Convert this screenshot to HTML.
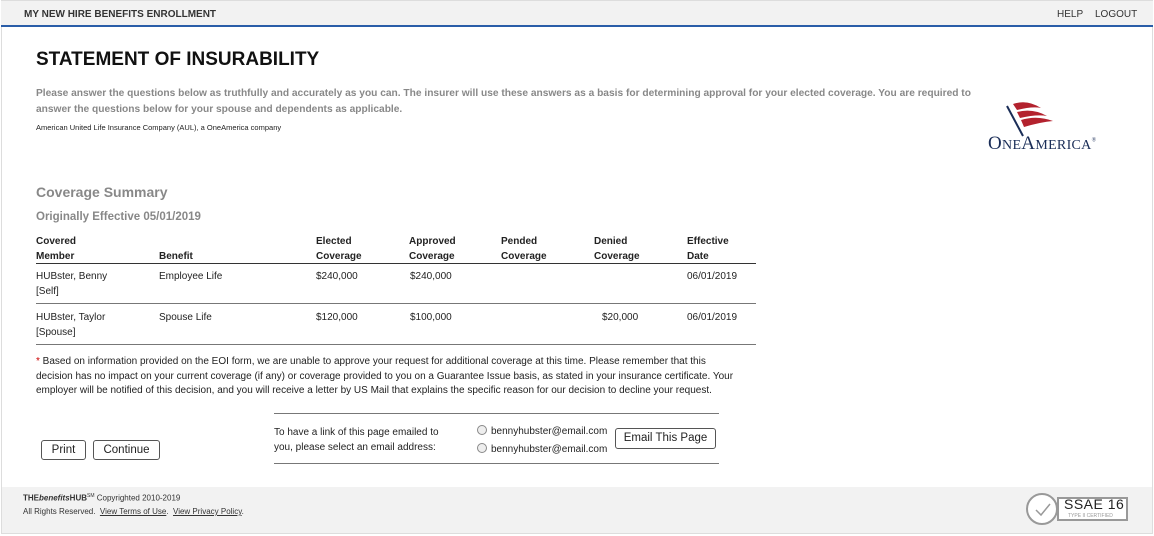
<!DOCTYPE html>
<html><head><style>
*{margin:0;padding:0;box-sizing:border-box}
body{width:1154px;height:536px;background:#fff;font-family:"Liberation Sans",sans-serif;color:#222;position:relative;overflow:hidden}
.frame{position:absolute;left:1px;top:0;width:1152px;height:534px;border:1px solid #ddd}
.hdr{position:absolute;left:1px;top:1px;width:1152px;height:26px;background:#f2f2f2;border-bottom:2px solid #2a5da8}
.hdr .t{position:absolute;left:23px;top:8px;font-size:10px;font-weight:bold;color:#333}
.hdr .r{position:absolute;top:8px;font-size:10px;color:#333}
.abs{position:absolute;white-space:nowrap}
h1{position:absolute;left:36px;top:49px;font-size:19px;font-weight:bold;color:#111}
.intro{position:absolute;left:36px;top:86px;font-size:10.2px;font-weight:bold;color:#888;line-height:15.5px;width:950px}
.small{font-size:7.5px;color:#222}
.h2{font-size:14px;font-weight:bold;color:#888}
.h3{font-size:11.5px;font-weight:bold;color:#888}
.th{font-size:10px;font-weight:bold;line-height:15px;color:#222}
.td{font-size:10px;line-height:15px;color:#222}
.line{position:absolute;height:1px;background:#777}
.btn{position:absolute;border:1px solid #555;border-radius:3px;font-size:11.5px;text-align:center;background:#fff;color:#222}
.radio{display:inline-block;width:10px;height:10px;border:1px solid #888;border-radius:50%;background:#eee;vertical-align:-1px;margin-right:4px}
.ftr{position:absolute;left:2px;top:487px;width:1150px;height:46px;background:#f2f2f2}
.ftr .a{position:absolute;left:21px;top:6px;font-size:8px;color:#333}
.ftr .b{position:absolute;left:21px;top:20px;font-size:8px;color:#333}
u{color:#333}
</style></head><body>
<div class="frame"></div>
<div class="hdr"><div class="t">MY NEW HIRE BENEFITS ENROLLMENT</div><div class="r" style="left:1056px">HELP</div><div class="r" style="left:1094px">LOGOUT</div></div>
<h1>STATEMENT OF INSURABILITY</h1>
<div class="intro">Please answer the questions below as truthfully and accurately as you can. The insurer will use these answers as a basis for determining approval for your elected coverage. You are required to answer the questions below for your spouse and dependents as applicable.</div>
<div class="abs small" style="left:36px;top:123px">American United Life Insurance Company (AUL), a OneAmerica company</div>
<svg class="abs" style="left:1005px;top:100px" width="60" height="40" viewBox="0 0 60 40">
<line x1="2" y1="6" x2="18" y2="36" stroke="#1a2d57" stroke-width="2"/>
<path d="M8 4 Q22 -1 36 8 Q28 6 12 10Z" fill="#b3222e"/>
<path d="M12 12 Q28 8 42 16 Q32 14 15 18Z" fill="#b3222e"/>
<path d="M16 20 Q32 15 48 21 Q36 22 19 27Z" fill="#b3222e"/>
</svg>
<div class="abs" style="left:988px;top:133px;font-family:'Liberation Serif',serif;font-size:19px;color:#1a2d57;letter-spacing:0.3px">O<span style="font-size:14px">NE</span>A<span style="font-size:14px">MERICA</span><sup style="font-size:6px">®</sup></div>
<div class="abs h2" style="left:36px;top:184px">Coverage Summary</div>
<div class="abs h3" style="left:36px;top:211px">Originally Effective 05/01/2019</div>
<div class="abs th" style="left:36px;top:234px">Covered<br>Member</div>
<div class="abs th" style="left:159px;top:249px">Benefit</div>
<div class="abs th" style="left:316px;top:234px">Elected<br>Coverage</div>
<div class="abs th" style="left:409px;top:234px">Approved<br>Coverage</div>
<div class="abs th" style="left:501px;top:234px">Pended<br>Coverage</div>
<div class="abs th" style="left:594px;top:234px">Denied<br>Coverage</div>
<div class="abs th" style="left:687px;top:234px">Effective<br>Date</div>
<div class="line" style="left:36px;top:263px;width:720px;background:#333"></div>
<div class="abs td" style="left:36px;top:269px">HUBster, Benny<br>[Self]</div>
<div class="abs td" style="left:159px;top:269px">Employee Life</div>
<div class="abs td" style="left:316px;top:269px">$240,000</div>
<div class="abs td" style="left:410px;top:269px">$240,000</div>
<div class="abs td" style="left:687px;top:269px">06/01/2019</div>
<div class="line" style="left:36px;top:303px;width:720px"></div>
<div class="abs td" style="left:36px;top:310px">HUBster, Taylor<br>[Spouse]</div>
<div class="abs td" style="left:159px;top:310px">Spouse Life</div>
<div class="abs td" style="left:316px;top:310px">$120,000</div>
<div class="abs td" style="left:410px;top:310px">$100,000</div>
<div class="abs td" style="left:602px;top:310px">$20,000</div>
<div class="abs td" style="left:687px;top:310px">06/01/2019</div>
<div class="line" style="left:36px;top:344px;width:720px"></div>
<div class="abs td" style="left:36px;top:355px;white-space:normal;width:705px;font-size:10px;line-height:14.5px"><span style="color:#c00">*</span> Based on information provided on the EOI form, we are unable to approve your request for additional coverage at this time. Please remember that this decision has no impact on your current coverage (if any) or coverage provided to you on a Guarantee Issue basis, as stated in your insurance certificate. Your employer will be notified of this decision, and you will receive a letter by US Mail that explains the specific reason for our decision to decline your request.</div>
<div class="line" style="left:274px;top:413px;width:445px"></div>
<div class="line" style="left:274px;top:463px;width:445px"></div>
<div class="abs td" style="left:274px;top:425px">To have a link of this page emailed to<br>you, please select an email address:</div>
<div class="abs td" style="left:477px;top:424px"><span class="radio"></span>bennyhubster@email.com</div>
<div class="abs td" style="left:477px;top:442px"><span class="radio"></span>bennyhubster@email.com</div>
<div class="btn" style="left:615px;top:428px;width:101px;height:21px;line-height:19px">Email This Page</div>
<div class="btn" style="left:41px;top:440px;width:45px;height:20px;line-height:18px">Print</div>
<div class="btn" style="left:93px;top:440px;width:67px;height:20px;line-height:18px">Continue</div>
<div class="ftr">
<div class="a"><b>THE<i>benefits</i>HUB</b><sup style="font-size:5px">SM</sup> Copyrighted 2010-2019</div>
<div class="b">All Rights Reserved. &nbsp;<u>View Terms of Use</u>. &nbsp;<u>View Privacy Policy</u>.</div>
<div style="position:absolute;left:1024px;top:6px;width:32px;height:32px;border:2px solid #999;border-radius:50%;background:#fff"></div>
<svg style="position:absolute;left:1032px;top:15px" width="18" height="16"><path d="M2 8 L7 13 L16 2" stroke="#999" stroke-width="1.5" fill="none"/></svg>
<div style="position:absolute;left:1055px;top:10px;width:71px;height:24px;border:2px solid #999;background:#fff"></div>
<div style="position:absolute;left:1062px;top:9px;font-size:14px;color:#222;letter-spacing:0.5px">SSAE 16</div>
<div style="position:absolute;left:1066px;top:26px;font-size:5px;color:#999">TYPE II CERTIFIED</div>
</div>
</body></html>
